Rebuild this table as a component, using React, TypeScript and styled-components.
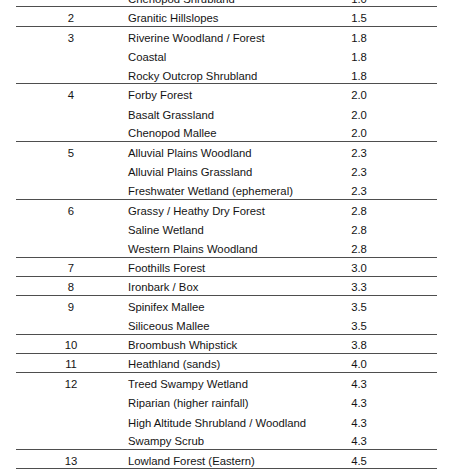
import React from "react";
import styled, { createGlobalStyle } from "styled-components";

const GlobalStyle = createGlobalStyle`
  html, body {
    margin: 0;
    padding: 0;
    background: #ffffff;
    overflow: hidden;
  }
`;

const ROW_H = 19.26;

const Page = styled.div`
  width: 474px;
  height: 474px;
  overflow: hidden;
  background: #ffffff;
  padding: 0 37px 0 16px;
  box-sizing: border-box;
`;

/* the screenshot is a crop of a longer table, so the first row is cut off */
const Table = styled.div`
  display: flex;
  flex-direction: column;
  margin-top: -12px;
  font-family: "Liberation Sans", Arial, sans-serif;
  font-size: 11.3px;
  color: #141414;
`;

const Group = styled.div`
  display: flex;
  flex-direction: column;
  border-bottom: 1px solid #4e4e4e;
`;

const Row = styled.div<{ $last?: boolean }>`
  display: grid;
  grid-template-columns: 110px 213px 40px 1fr;
  align-items: center;
  box-sizing: border-box;
  padding-top: 3px;
  height: ${({ $last }) => ($last ? `${ROW_H - 1}px` : `${ROW_H}px`)};
  white-space: nowrap;
`;

const ClassCell = styled.div`
  text-align: center;
`;

const NameCell = styled.div`
  padding-left: 2px;
  overflow: visible;
`;

const ValueCell = styled.div`
  text-align: center;
`;

type Entry = { name: string; value: string };
type Band = { id: string; items: Entry[] };

const bands: Band[] = [
  { id: "", items: [{ name: "Chenopod Shrubland", value: "1.0" }] },
  { id: "2", items: [{ name: "Granitic Hillslopes", value: "1.5" }] },
  {
    id: "3",
    items: [
      { name: "Riverine Woodland / Forest", value: "1.8" },
      { name: "Coastal", value: "1.8" },
      { name: "Rocky Outcrop Shrubland", value: "1.8" },
    ],
  },
  {
    id: "4",
    items: [
      { name: "Forby Forest", value: "2.0" },
      { name: "Basalt Grassland", value: "2.0" },
      { name: "Chenopod Mallee", value: "2.0" },
    ],
  },
  {
    id: "5",
    items: [
      { name: "Alluvial Plains Woodland", value: "2.3" },
      { name: "Alluvial Plains Grassland", value: "2.3" },
      { name: "Freshwater Wetland (ephemeral)", value: "2.3" },
    ],
  },
  {
    id: "6",
    items: [
      { name: "Grassy / Heathy Dry Forest", value: "2.8" },
      { name: "Saline Wetland", value: "2.8" },
      { name: "Western Plains Woodland", value: "2.8" },
    ],
  },
  { id: "7", items: [{ name: "Foothills Forest", value: "3.0" }] },
  { id: "8", items: [{ name: "Ironbark / Box", value: "3.3" }] },
  {
    id: "9",
    items: [
      { name: "Spinifex Mallee", value: "3.5" },
      { name: "Siliceous Mallee", value: "3.5" },
    ],
  },
  { id: "10", items: [{ name: "Broombush Whipstick", value: "3.8" }] },
  { id: "11", items: [{ name: "Heathland (sands)", value: "4.0" }] },
  {
    id: "12",
    items: [
      { name: "Treed Swampy Wetland", value: "4.3" },
      { name: "Riparian (higher rainfall)", value: "4.3" },
      { name: "High Altitude Shrubland / Woodland", value: "4.3" },
      { name: "Swampy Scrub", value: "4.3" },
    ],
  },
  { id: "13", items: [{ name: "Lowland Forest (Eastern)", value: "4.5" }] },
];

export default function App() {
  return (
    <>
      <GlobalStyle />
      <Page>
        <Table>
          {bands.map((band, bi) => (
            <Group key={bi}>
              {band.items.map((item, i) => (
                <Row key={item.name} $last={i === band.items.length - 1}>
                  <ClassCell>{i === 0 ? band.id : ""}</ClassCell>
                  <NameCell>{item.name}</NameCell>
                  <ValueCell>{item.value}</ValueCell>
                  <div />
                </Row>
              ))}
            </Group>
          ))}
        </Table>
      </Page>
    </>
  );
}
